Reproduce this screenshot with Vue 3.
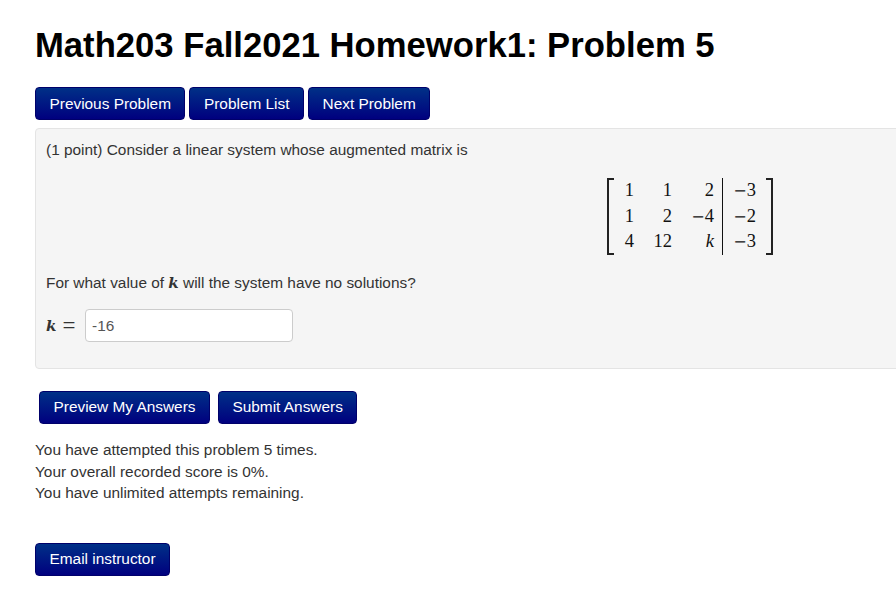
<template>
  <div class="pagina">
    <h1 class="titulo">Math203 Fall2021 Homework1: Problem 5</h1>

    <div class="nav">
      <a class="btn" v-for="b in navegacion" :key="b">{{ b }}</a>
    </div>

    <div class="problema">
      <p class="enunciado">(1 point) Consider a linear system whose augmented matrix is</p>

      <div class="matriz-wrap">
        <div class="corchete izq"></div>
        <div class="matriz">
          <template v-for="(fila, i) in matriz" :key="i">
            <span v-for="(c, j) in fila" :key="j" :class="['celda', 'col' + j, { var: c === 'k' }]">
              <span v-if="c.startsWith('−')" class="menos">−</span>{{ c.replace('−', '') }}
            </span>
          </template>
        </div>
        <div class="corchete der"></div>
      </div>

      <p class="pregunta">For what value of <span class="k">k</span> will the system have no solutions?</p>

      <div class="respuesta">
        <span class="etiqueta"><span class="k">k</span><span class="igual">=</span></span>
        <input class="entrada" type="text" value="-16" />
      </div>
    </div>

    <div class="acciones">
      <a class="btn abajo">Preview My Answers</a>
      <a class="btn abajo">Submit Answers</a>
    </div>

    <div class="intentos">
      <div>You have attempted this problem 5 times.</div>
      <div>Your overall recorded score is 0%.</div>
      <div>You have unlimited attempts remaining.</div>
    </div>

    <a class="btn abajo correo">Email instructor</a>
  </div>
</template>

<script setup>
const navegacion = ['Previous Problem', 'Problem List', 'Next Problem']

const matriz = [
  ['1', '1', '2', '−3'],
  ['1', '2', '−4', '−2'],
  ['4', '12', 'k', '−3']
]
</script>

<style scoped>
.pagina {
  width: 896px;
  height: 594px;
  overflow: hidden;
  padding: 25px 0 0 35px;
  box-sizing: border-box;
  font-family: "Liberation Sans", Arial, sans-serif;
  font-size: 15.4px;
  line-height: 22px;
  color: #333;
  background: #fff;
}

.titulo {
  margin: 0 0 22px;
  font-size: 34.65px;
  line-height: 40px;
  font-weight: bold;
  color: #000;
}

.nav {
  display: flex;
  gap: 4px;
  height: 33px;
  margin-bottom: 8px;
}

.btn {
  display: inline-block;
  box-sizing: border-box;
  height: 33px;
  padding: 0 13.5px;
  line-height: 31px;
  font-size: 15.4px;
  color: #fff;
  white-space: nowrap;
  border: 1px solid #00006a;
  border-radius: 4px;
  background: linear-gradient(to bottom, #003087, #00007f);
}

.abajo {
  line-height: 29px;
}

.problema {
  width: 1310px;
  height: 241px;
  box-sizing: border-box;
  padding: 10px 10px 0;
  background: #f5f5f5;
  border: 1px solid #e4e4e4;
  border-radius: 4px;
}

.enunciado {
  margin: 0;
}

.matriz-wrap {
  display: flex;
  justify-content: center;
  width: 1288px;
  margin-top: 17px;
  height: 76px;
}

.corchete {
  width: 5px;
  height: 73px;
  border: 2px solid #222;
}

.izq {
  border-right: none;
}

.der {
  border-left: none;
}

.matriz {
  display: grid;
  grid-template-columns: 20px 38px 51px 43px;
  grid-auto-rows: 25.5px;
  font-family: "Liberation Serif", "Times New Roman", serif;
  font-size: 18.5px;
  line-height: 25.5px;
  color: #111;
}

.celda {
  text-align: right;
}

.col2 {
  padding-right: 8px;
  border-right: 1px solid #111;
}

.col3 {
  padding-right: 10px;
}

.menos {
  font-family: "DejaVu Serif", serif;
  font-size: 16px;
}

.var {
  font-style: italic;
}

.pregunta {
  margin: 18px 0 0;
}

.k {
  font-family: "DejaVu Serif", serif;
  font-size: 15px;
  font-style: italic;
  font-weight: bold;
}

.respuesta {
  display: flex;
  align-items: center;
  margin-top: 15px;
}

.etiqueta {
  width: 39px;
  display: flex;
  align-items: center;
}

.igual {
  margin-left: 6px;
  font-family: "Liberation Serif", "Times New Roman", serif;
  font-size: 23px;
}

.entrada {
  width: 208px;
  height: 33px;
  box-sizing: border-box;
  padding: 0 6px;
  font-family: inherit;
  font-size: 15.4px;
  color: #555;
  background: #fff;
  border: 1px solid #ccc;
  border-radius: 4px;
  outline: none;
}

.acciones {
  display: flex;
  gap: 8px;
  margin: 22px 0 0 4px;
}

.intentos {
  margin-top: 15px;
  line-height: 21.6px;
}

.correo {
  margin-top: 39px;
}
</style>
